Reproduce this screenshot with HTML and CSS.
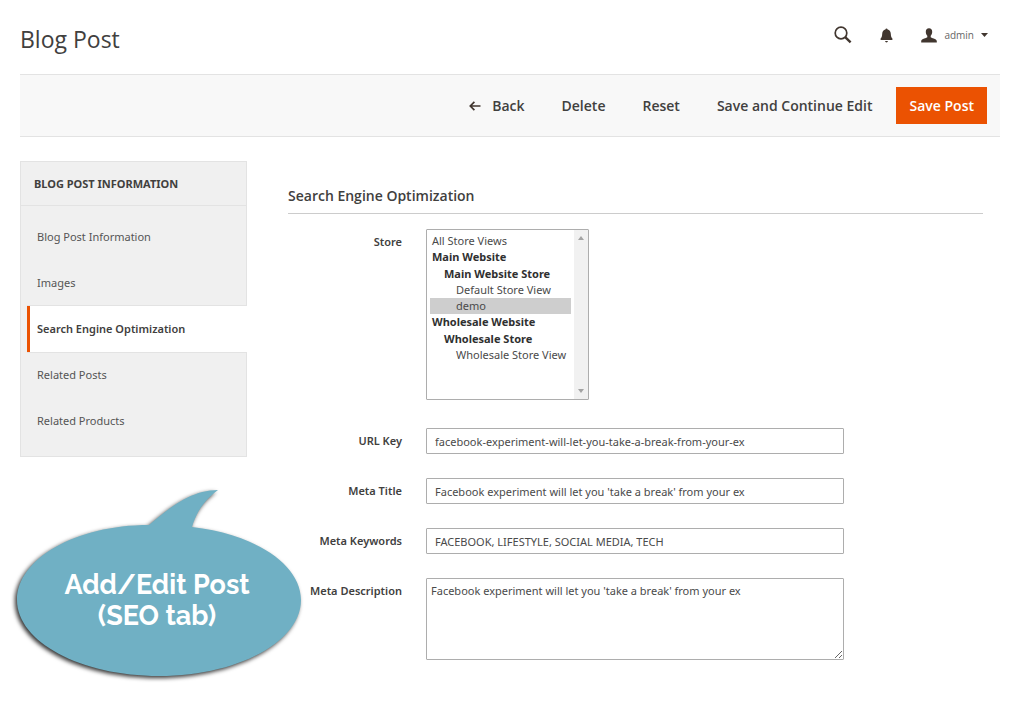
FILE: index.html
```
<!DOCTYPE html>
<html lang="en">
  <head>
    <meta charset="UTF-8">
    <title>Blog Post</title>
    <link rel="stylesheet" href="styles.css">
  </head>
  <body>
    <header class="page-header">
      <h1>Blog Post</h1>
      <div class="header-tools">
        <button type="button" class="icon-button" aria-label="Search">
          <svg width="18" height="18" viewBox="0 0 18 18" fill="none" stroke="#41362f">
            <circle cx="7" cy="7" r="5.8" stroke-width="1.7"/>
            <path d="M11.2 11.2L16.6 16.4" stroke-width="2.4"/>
          </svg>
        </button>
        <button type="button" class="icon-button" aria-label="Notifications">
          <svg width="13" height="15" viewBox="0 0 13 15" fill="#41362f">
            <path d="M6.5 0.5C7.1 0.5 7.5 0.9 7.6 1.5C9.7 2 10.7 3.7 10.8 5.8C10.9 8.6 11.4 9.6 12.4 10.6V12H0.6V10.6C1.6 9.6 2.1 8.6 2.2 5.8C2.3 3.7 3.3 2 5.4 1.5C5.5 0.9 5.9 0.5 6.5 0.5Z"/>
            <path d="M5 13H8C7.8 13.9 7.2 14.4 6.5 14.4C5.8 14.4 5.2 13.9 5 13Z"/>
          </svg>
        </button>
        <button type="button" class="account">
          <svg width="16" height="15" viewBox="0 0 16 15" fill="#41362f">
            <path d="M8 0.2C10.1 0.2 11.2 1.6 11.2 3.8C11.2 5.5 10.6 6.9 9.7 7.8V9.2C9.9 10 15.8 10.6 15.8 13V14.6H0.2V13C0.2 10.6 6.1 10 6.3 9.2V7.8C5.4 6.9 4.8 5.5 4.8 3.8C4.8 1.6 5.9 0.2 8 0.2Z"/>
          </svg>
          <span>admin</span>
          <svg class="caret" width="7" height="4" viewBox="0 0 7 4" fill="#41362f">
            <path d="M0 0H7L3.5 4Z"/>
          </svg>
        </button>
      </div>
    </header>

    <div class="page-actions">
      <button type="button" class="action action-back">
        <svg width="12" height="10" viewBox="0 0 12 10" fill="none" stroke="#41362f" stroke-width="1.7">
          <path d="M11.5 5H1.5M5.4 0.9L1.3 5L5.4 9.1"/>
        </svg>
        Back
      </button>
      <button type="button" class="action">Delete</button>
      <button type="button" class="action">Reset</button>
      <button type="button" class="action">Save and Continue Edit</button>
      <button type="submit" form="post-form" class="action action-primary">Save Post</button>
    </div>

    <div class="page-columns">
      <aside class="sidebar">
        <nav class="tabs">
          <h2>Blog Post Information</h2>
          <ul>
            <li><a href="#info">Blog Post Information</a></li>
            <li><a href="#images">Images</a></li>
            <li><a href="#seo" class="active">Search Engine Optimization</a></li>
            <li><a href="#posts">Related Posts</a></li>
            <li><a href="#products">Related Products</a></li>
          </ul>
        </nav>
        <div class="callout">
          <svg class="callout-bubble" width="288" height="192" viewBox="0 0 288 192" fill="#70b0c4">
            <path d="M136 37C156 20 178 2 205 2C193 11 184 22 179 39C241 46 288 76 288 112C288 154 224 188 146 188C68 188 4 154 4 112C4 71 62 37 136 37Z"/>
          </svg>
          <p>Add/Edit Post<br>(SEO tab)</p>
        </div>
      </aside>

      <main class="content">
        <form id="post-form">
          <h2>Search Engine Optimization</h2>
          <div class="field field-store">
            <label for="store">Store</label>
            <div class="listbox">
              <select id="store" multiple>
                <option>All Store Views</option>
                <optgroup label="Main Website"></optgroup>
                <optgroup class="store-group" label="Main Website Store">
                  <option>Default Store View</option>
                  <option selected>demo</option>
                </optgroup>
                <optgroup label="Wholesale Website"></optgroup>
                <optgroup class="store-group" label="Wholesale Store">
                  <option>Wholesale Store View</option>
                </optgroup>
              </select>
              <div class="listbox-scroll" aria-hidden="true">
                <svg width="6" height="4" viewBox="0 0 6 4" fill="#a3a3a3"><path d="M0 4H6L3 0Z"/></svg>
                <svg width="6" height="4" viewBox="0 0 6 4" fill="#a3a3a3"><path d="M0 0H6L3 4Z"/></svg>
              </div>
            </div>
          </div>
          <div class="field">
            <label for="url-key">URL Key</label>
            <input type="text" id="url-key" value="facebook-experiment-will-let-you-take-a-break-from-your-ex">
          </div>
          <div class="field">
            <label for="meta-title">Meta Title</label>
            <input type="text" id="meta-title" value="Facebook experiment will let you 'take a break' from your ex">
          </div>
          <div class="field">
            <label for="meta-keywords">Meta Keywords</label>
            <input type="text" id="meta-keywords" value="FACEBOOK, LIFESTYLE, SOCIAL MEDIA, TECH">
          </div>
          <div class="field">
            <label for="meta-description">Meta Description</label>
            <textarea id="meta-description" spellcheck="false">Facebook experiment will let you 'take a break' from your ex</textarea>
          </div>
        </form>
      </main>
    </div>
  </body>
</html>
```
FILE: styles.css
```
* {
  box-sizing: border-box;
}

body {
  margin: 0;
  padding: 0 24px 40px 20px;
  background: #fff;
  color: #41403e;
  font-family: 'Noto Sans', 'Open Sans', Helvetica, Arial, sans-serif;
  font-size: 11px;
}

button {
  border: 0;
  padding: 0;
  background: none;
  color: inherit;
  font: inherit;
  cursor: pointer;
}

svg {
  display: block;
}

.page-header {
  display: flex;
  justify-content: space-between;
  align-items: center;
  height: 74px;
  padding-right: 12px;
}

.page-header h1 {
  margin: 4px 0 0;
  font-family: 'Open Sans', sans-serif;
  font-size: 23px;
  font-weight: 400;
}

.header-tools {
  display: flex;
  align-items: center;
  gap: 28px;
  padding-bottom: 4px;
}

.account {
  display: flex;
  align-items: center;
  gap: 7px;
  color: #666;
  font-family: 'Open Sans', sans-serif;
  font-size: 10px;
}

.page-actions {
  display: flex;
  justify-content: flex-end;
  align-items: center;
  gap: 37px;
  height: 63px;
  padding-right: 13px;
  background: #f8f8f8;
  border-top: 1px solid #e3e3e3;
  border-bottom: 1px solid #e3e3e3;
}

.action {
  font-family: 'Open Sans', sans-serif;
  font-size: 14px;
  font-weight: 600;
}

.action-back {
  display: flex;
  align-items: center;
  gap: 11px;
}

.action-primary {
  height: 37px;
  margin-left: -13px;
  padding: 0 13px;
  background: #eb5202;
  color: #fff;
}

.page-columns {
  display: flex;
  align-items: flex-start;
  gap: 41px;
  padding: 24px 17px 0 0;
}

.sidebar {
  position: relative;
  flex: 0 0 227px;
}

.tabs {
  background: #f0f0f0;
  border: 1px solid #e3e3e3;
}

.tabs h2 {
  margin: 0;
  padding: 0 13px;
  border-bottom: 1px solid #e3e3e3;
  font-size: 11px;
  font-weight: 700;
  line-height: 43px;
  text-transform: uppercase;
}

.tabs ul {
  margin: 0;
  padding: 8px 0 12px 6px;
  list-style: none;
}

.tabs a {
  display: block;
  padding-left: 10px;
  color: #555;
  line-height: 46px;
  text-decoration: none;
}

.tabs .active {
  margin-right: -1px;
  padding-left: 7px;
  border-left: 3px solid #eb5202;
  background: #fff;
  color: #41403e;
  font-weight: 600;
  box-shadow: 0 1px #e3e3e3, 0 -1px #e3e3e3;
}

/* speech bubble laid over the page, below the tabs */
.callout {
  position: absolute;
  top: 100%;
  left: -7px;
  width: 288px;
  margin-top: 31px;
}

.callout-bubble {
  overflow: visible;
  filter: drop-shadow(-2px 2px 2px rgba(0, 0, 0, 0.8));
}

.callout p {
  position: absolute;
  top: 81px;
  left: 0;
  width: 100%;
  margin: 0;
  color: #fff;
  font-family: Raleway, Lato, sans-serif;
  font-size: 27px;
  font-weight: 700;
  line-height: 31px;
  text-align: center;
}

.content {
  flex: 1;
  min-width: 0;
}

.content h2 {
  margin: 24px 0 15px;
  padding-bottom: 7px;
  border-bottom: 1px solid #ccc;
  font-family: 'Open Sans', sans-serif;
  font-size: 14px;
  font-weight: 600;
  line-height: 21px;
}

.field {
  display: grid;
  grid-template-columns: 114px minmax(0, 1fr);
  column-gap: 24px;
  align-items: start;
  margin-bottom: 24px;
}

.field-store {
  margin-bottom: 28px;
}

.field label {
  font-weight: 600;
  line-height: 26px;
  text-align: right;
}

.field input,
.field textarea,
.field select {
  width: 75%;
  margin: 0;
  border: 1px solid #adadad;
  border-radius: 1px;
  background: #fff;
  color: #4a4a4a;
  font: inherit;
}

.field input {
  height: 26px;
  padding: 0 8px;
}

.field textarea {
  display: block;
  height: 82px;
  padding: 4px;
  resize: vertical;
}

.listbox {
  position: relative;
  width: 163px;
}

.field select {
  display: block;
  width: 100%;
  height: 171px;
  padding: 3px 17px 3px 3px;
}

/* track with its two arrows, over the right edge of the list */
.listbox-scroll {
  position: absolute;
  top: 1px;
  right: 1px;
  bottom: 1px;
  display: flex;
  flex-direction: column;
  justify-content: space-between;
  align-items: center;
  width: 14px;
  padding: 6px 0;
  background: #f1f1f1;
  pointer-events: none;
}

.field option,
.field optgroup {
  min-height: 16px;
  padding: 0 2px;
}

.field optgroup {
  padding: 0;
  color: #303030;
  font-weight: 700;
}

.field option {
  color: #4a4a4a;
  font-weight: 400;
}

.field .store-group {
  padding-top: 1px;
  text-indent: 12px;
}

.field .store-group option {
  text-indent: 24px;
}
```
